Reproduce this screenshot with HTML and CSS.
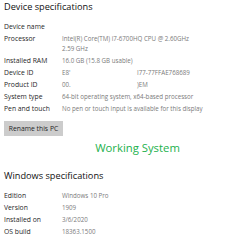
FILE: index.html
```html
<!DOCTYPE html>
<html lang="en">
<head>
    <meta charset="UTF-8">
    <title>About</title>
    <link rel="stylesheet" href="styles.css">
</head>
<body>
    <section class="specs">
        <h2 class="section-title">Device specifications</h2>
        <div class="spec-list">
            <div class="label">Device name</div>
            <div class="value"></div>
            <div class="label">Processor</div>
            <div class="value">Intel(R) Core(TM) i7-6700HQ CPU @ 2.60GHz<br>2.59 GHz</div>
            <div class="label">Installed RAM</div>
            <div class="value">16.0 GB (15.8 GB usable)</div>
            <div class="label">Device ID</div>
            <div class="value split"><span>E8'</span><span>I77-77FFAE768689</span></div>
            <div class="label">Product ID</div>
            <div class="value split"><span>00.</span><span>)EM</span></div>
            <div class="label">System type</div>
            <div class="value">64-bit operating system, x64-based processor</div>
            <div class="label">Pen and touch</div>
            <div class="value">No pen or touch input is available for this display</div>
        </div>
        <button class="rename-btn">Rename this PC</button>
    </section>

    <p class="status">Working System</p>

    <section class="specs">
        <h2 class="section-title">Windows specifications</h2>
        <div class="spec-list">
            <div class="label">Edition</div>
            <div class="value">Windows 10 Pro</div>
            <div class="label">Version</div>
            <div class="value">1909</div>
            <div class="label">Installed on</div>
            <div class="value">3/6/2020</div>
            <div class="label">OS build</div>
            <div class="value">18363.1500</div>
        </div>
    </section>
</body>
</html>
```

FILE: styles.css
```css
:root {
    --label-color: #1f1f1f;
    --value-color: #7a7a7a;
    --status-color: #22b14c;
}

* {
    margin: 0;
    padding: 0;
    box-sizing: border-box;
}

body {
    background-color: #ffffff;
    font-family: 'Open Sans', 'Liberation Sans', sans-serif;
    padding: 0 4px;
    width: 243px;
    height: 240px;
    overflow: hidden;
}

.section-title {
    font-size: 9.2px;
    font-weight: normal;
    color: #111;
    line-height: 12px;
    padding-top: 1px;
    margin-bottom: 9px;
}

.spec-list {
    display: grid;
    grid-template-columns: 58px 1fr;
    row-gap: 2px;
    font-size: 6.8px;
    line-height: 10px;
}

.label {
    color: var(--label-color);
    white-space: nowrap;
}

.value {
    color: var(--value-color);
    font-size: 6.2px;
    min-height: 10px;
}

.value.split {
    display: flex;
}

.value.split span:first-child {
    width: 75px;
}

.rename-btn {
    margin-top: 7px;
    width: 59px;
    height: 15px;
    border: none;
    background-color: #cccccc;
    color: #1f1f1f;
    font-family: inherit;
    font-size: 6.8px;
}

.status {
    color: var(--status-color);
    font-size: 11.3px;
    line-height: 14px;
    text-align: center;
    padding-left: 32px;
    margin-top: 5px;
    margin-bottom: 14px;
}
```
